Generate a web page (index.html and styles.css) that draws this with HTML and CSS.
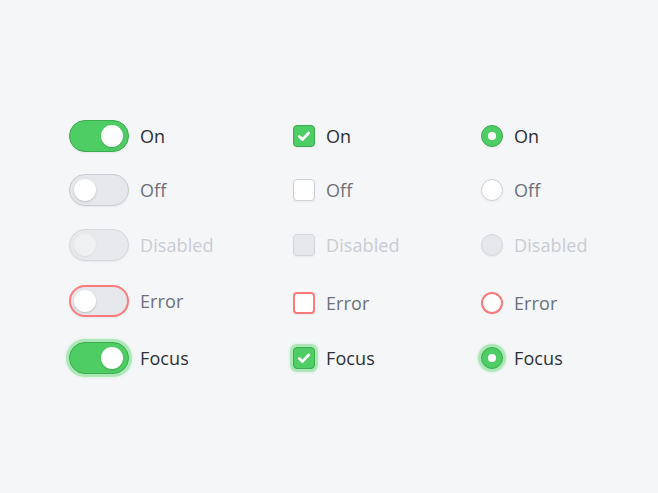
FILE: index.html
```html
<!DOCTYPE html>
<html>
<head>
<meta charset="utf-8">
<link rel="stylesheet" href="styles.css">
</head>
<body>
<div class="grid">
  <div class="cell"><span class="toggle on"><span class="knob"></span></span><span class="label dark">On</span></div>
  <div class="cell"><span class="check on"><svg viewBox="0 0 22 22" width="22" height="22"><path d="M6.3 11.4l3.1 3 6.3-6.4" fill="none" stroke="#fff" stroke-width="2.8" stroke-linecap="round" stroke-linejoin="round"/></svg></span><span class="label dark">On</span></div>
  <div class="cell"><span class="radio on"><span class="dot"></span></span><span class="label dark">On</span></div>

  <div class="cell"><span class="toggle off"><span class="knob"></span></span><span class="label">Off</span></div>
  <div class="cell"><span class="check off"></span><span class="label">Off</span></div>
  <div class="cell"><span class="radio off"></span><span class="label">Off</span></div>

  <div class="cell"><span class="toggle disabled"><span class="knob"></span></span><span class="label light">Disabled</span></div>
  <div class="cell"><span class="check disabled"></span><span class="label light">Disabled</span></div>
  <div class="cell"><span class="radio disabled"></span><span class="label light">Disabled</span></div>

  <div class="cell"><span class="toggle error"><span class="knob"></span></span><span class="label">Error</span></div>
  <div class="cell low"><span class="check error"></span><span class="label">Error</span></div>
  <div class="cell low"><span class="radio error"></span><span class="label">Error</span></div>

  <div class="cell focus-row"><span class="toggle on focus"><span class="knob"></span></span><span class="label dark">Focus</span></div>
  <div class="cell focus-row"><span class="check on focus"><svg viewBox="0 0 22 22" width="22" height="22"><path d="M6.3 11.4l3.1 3 6.3-6.4" fill="none" stroke="#fff" stroke-width="2.8" stroke-linecap="round" stroke-linejoin="round"/></svg></span><span class="label dark">Focus</span></div>
  <div class="cell focus-row"><span class="radio on focus"><span class="dot"></span></span><span class="label dark">Focus</span></div>
</div>
</body>
</html>
```
FILE: styles.css
```css
html, body {
  margin: 0;
  padding: 0;
  background: #f5f6f8;
  width: 658px;
  height: 493px;
  overflow: hidden;
  font-family: "Open Sans", "Lato", sans-serif;
}
.grid {
  display: grid;
  grid-template-columns: 224px 188px auto;
  grid-template-rows: 55px 54px 55px 57px 56px;
  padding: 108px 0 0 69px;
}
.cell {
  display: flex;
  align-items: center;
  gap: 11px;
}
.cell.low {
  padding-top: 5px;
}
.cell.focus-row {
  padding-top: 2px;
}
.label {
  font-size: 18px;
  color: #6c717a;
  line-height: 1;
  letter-spacing: 0.1px;
}
.label.dark { color: #2c3037; }
.label.light { color: #c9ccd2; }

.toggle {
  box-sizing: border-box;
  width: 60px;
  height: 32px;
  border-radius: 16px;
  border: 1.5px solid #c9ccd2;
  background: #e5e7eb;
  display: flex;
  align-items: center;
  padding: 0 4px;
  flex: none;
  box-shadow: 0 1px 2px rgba(0,0,0,0.06);
}
.knob {
  width: 22px;
  height: 22px;
  border-radius: 50%;
  background: #fff;
  box-shadow: 0 1px 2px rgba(0,0,0,0.18);
}
.toggle.on {
  background: #4fcd65;
  border-color: #3aab4f;
  justify-content: flex-end;
  padding-right: 5px;
}
.toggle.disabled {
  background: #e8e9ec;
  border-color: #d5d8dc;
}
.toggle.disabled .knob {
  background: #eff0f2;
  box-shadow: 0 1px 2px rgba(0,0,0,0.06);
}
.toggle.error {
  border: 2.5px solid #fb7b7b;
  padding-left: 3px;
}
.toggle.focus {
  box-shadow: 0 0 0 3px #ace8b7, 0 0 3px 3px rgba(172,232,183,0.6);
}

.check {
  box-sizing: border-box;
  width: 22px;
  height: 22px;
  border-radius: 4px;
  border: 1.5px solid #cdd0d5;
  background: #fff;
  flex: none;
  display: flex;
  align-items: center;
  justify-content: center;
  box-shadow: 0 1px 2px rgba(0,0,0,0.05);
}
.check svg { flex: none; }
.check.on {
  background: #4fcd65;
  border-color: #3aab4f;
}
.check.disabled {
  background: #e5e7ea;
  border-color: #d3d6da;
}
.check.error {
  border: 2.5px solid #fb7b7b;
}
.check.focus, .radio.focus {
  box-shadow: 0 0 0 3px #ace8b7, 0 0 3px 3px rgba(172,232,183,0.6);
}

.radio {
  box-sizing: border-box;
  width: 22px;
  height: 22px;
  border-radius: 50%;
  border: 1.5px solid #cdd0d5;
  background: #fff;
  flex: none;
  display: flex;
  align-items: center;
  justify-content: center;
  box-shadow: 0 1px 2px rgba(0,0,0,0.05);
}
.radio.on {
  background: #4fcd65;
  border-color: #3aab4f;
}
.radio .dot {
  width: 8px;
  height: 8px;
  border-radius: 50%;
  background: #fff;
}
.radio.disabled {
  background: #e5e7ea;
  border-color: #d3d6da;
}
.radio.error {
  border: 2.5px solid #fb7b7b;
}
```
